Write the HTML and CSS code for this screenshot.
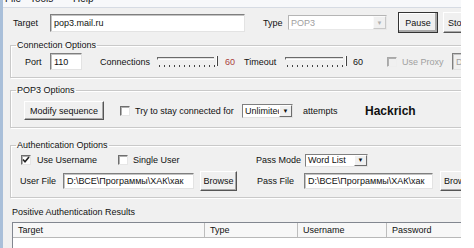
FILE: index.html
```html
<!DOCTYPE html>
<html lang="en">
<head>
    <meta charset="UTF-8">
    <meta name="viewport" content="width=device-width, initial-scale=1.0">
    <title>Hydra GUI</title>
    <link rel="stylesheet" href="styles.css">
</head>
<body>
    <div class="window">
        <div class="menubar">
            <div class="menu-items">
                <span class="m-file">File</span>
                <span class="m-tools">Tools</span>
                <span class="m-help">Help</span>
            </div>
        </div>

        <div class="toprow">
            <span class="lbl w-target">Target</span>
            <div class="txt w-host">pop3.mail.ru</div>
            <span class="lbl w-type">Type</span>
            <div class="sel sel-disabled w-proto"><span class="sel-val">POP3</span><span class="sel-btn">&#9660;</span></div>
            <button class="btn btn-default w-pause">Pause</button>
            <button class="btn w-stop">Stop</button>
        </div>

        <fieldset class="group g-conn">
            <legend>Connection Options</legend>
            <div class="row row-conn">
                <span class="lbl w-port">Port</span>
                <div class="txt w-portval">110</div>
                <span class="lbl w-conns">Connections</span>
                <div class="slider w-slide1"><div class="trough"></div><div class="ticks"></div><div class="thumb"></div></div>
                <span class="lbl val-red w-v1">60</span>
                <span class="lbl w-timeout">Timeout</span>
                <div class="slider w-slide2"><div class="trough"></div><div class="ticks"></div><div class="thumb"></div></div>
                <span class="lbl w-v2">60</span>
                <span class="chk chk-disabled"></span>
                <span class="lbl lbl-disabled w-proxy">Use Proxy</span>
                <div class="txt txt-disabled w-proxyval">D</div>
            </div>
        </fieldset>

        <fieldset class="group g-pop">
            <legend>POP3 Options</legend>
            <div class="row row-pop">
                <button class="btn w-modify">Modify sequence</button>
                <span class="chk chk-pop"></span>
                <span class="lbl w-stay">Try to stay connected for</span>
                <div class="sel w-unlim"><span class="sel-val">Unlimited</span><span class="sel-btn">&#9660;</span></div>
                <span class="lbl w-attempts">attempts</span>
                <span class="brand">Hackrich</span>
            </div>
        </fieldset>

        <fieldset class="group g-auth">
            <legend>Authentication Options</legend>
            <div class="row row-auth1">
                <span class="chk chk-checked">
                    <svg width="8" height="8" viewBox="0 0 8 8"><polyline points="1,3.5 3,5.8 7,1" fill="none" stroke="#222" stroke-width="1.6"/></svg>
                </span>
                <span class="lbl w-useuser">Use Username</span>
                <span class="chk"></span>
                <span class="lbl w-single">Single User</span>
                <span class="lbl w-passmode">Pass Mode</span>
                <div class="sel w-wordlist"><span class="sel-val">Word List</span><span class="sel-btn">&#9660;</span></div>
            </div>
            <div class="row row-auth2">
                <span class="lbl w-userfile">User File</span>
                <div class="txt w-userpath">D:\ВСЕ\Программы\ХАК\хак</div>
                <button class="btn w-browse">Browse</button>
                <span class="lbl w-passfile">Pass File</span>
                <div class="txt w-passpath">D:\ВСЕ\Программы\ХАК\хак</div>
                <button class="btn w-browse2">Browse</button>
            </div>
        </fieldset>

        <div class="results-title">Positive Authentication Results</div>
        <div class="results">
            <div class="results-head">
                <span class="col c-target">Target</span>
                <span class="col c-type">Type</span>
                <span class="col c-user">Username</span>
                <span class="col c-pass">Password</span>
            </div>
            <div class="results-body"></div>
        </div>
    </div>
</body>
</html>
```

FILE: styles.css
```css
* {
    box-sizing: border-box;
}
body {
    margin: 0;
    background: #fff;
    font-family: "Liberation Sans", Arial, sans-serif;
    font-size: 9px;
    color: #111;
}
.window {
    width: 461px;
    height: 248px;
    overflow: hidden;
    background: #f0f0f0;
    border-left: 3px solid #a9bfd9;
}

/* menu bar, only its lower edge is in the picture */
.menubar {
    height: 8px;
    overflow: hidden;
    background: #f7f8fa;
    border-bottom: 1px solid #d6dbe3;
}
.menu-items {
    display: flex;
    margin-top: -6px;
    font-size: 10px;
    line-height: 10px;
}
.m-file { margin-left: 2px; width: 25px; }
.m-tools { width: 43px; }

/* common bits */
.lbl {
    flex-shrink: 0;
    white-space: nowrap;
}
.lbl-disabled {
    color: #a0a0a0;
}
.val-red {
    color: #a8413c;
}
.txt {
    flex-shrink: 0;
    background: #fff;
    border: 1px solid;
    border-color: #7f7f7f #e3e3e3 #e3e3e3 #7f7f7f;
    box-shadow: inset 1px 1px 0 #c4c4c4;
    padding: 0 3px;
    white-space: nowrap;
    overflow: hidden;
    display: flex;
    align-items: center;
}
.txt-disabled {
    background: #f0f0f0;
    color: #a0a0a0;
}
.sel {
    flex-shrink: 0;
    background: #fff;
    border: 1px solid;
    border-color: #7f7f7f #e3e3e3 #e3e3e3 #7f7f7f;
    display: flex;
    align-items: stretch;
    overflow: hidden;
}
.sel-val {
    flex: 1;
    padding-left: 2px;
    display: flex;
    align-items: center;
    overflow: hidden;
    white-space: nowrap;
}
.sel-btn {
    width: 13px;
    flex-shrink: 0;
    background: #f0f0f0;
    border: 1px solid;
    border-color: #fff #6d6d6d #6d6d6d #fff;
    font-size: 6px;
    display: flex;
    align-items: center;
    justify-content: center;
}
.sel-disabled {
    background: #fff;
    color: #a0a0a0;
    border-color: #b5b5b5 #e8e8e8 #e8e8e8 #b5b5b5;
}
.sel-disabled .sel-btn {
    color: #b0b0b0;
    border-color: #fafafa #c8c8c8 #c8c8c8 #fafafa;
}
.btn {
    flex-shrink: 0;
    font-family: inherit;
    font-size: 9px;
    color: #111;
    background: #f0f0f0;
    border: 1px solid;
    border-color: #fff #555 #555 #fff;
    box-shadow: inset -1px -1px 0 #a8a8a8;
    padding: 0;
    white-space: nowrap;
    overflow: hidden;
}
.btn-default {
    outline: 1px solid #333;
    outline-offset: -1px;
    box-shadow: inset -2px -2px 0 #a8a8a8, inset 1px 1px 0 #fff;
}
.chk {
    flex-shrink: 0;
    width: 10px;
    height: 10px;
    background: #fff;
    border: 1px solid;
    border-color: #6e6e6e #e6e6e6 #e6e6e6 #6e6e6e;
    box-shadow: inset 1px 1px 0 #b0b0b0;
    display: flex;
    align-items: center;
    justify-content: center;
}
.chk-disabled {
    background: #f0f0f0;
    border-color: #a8a8a8 #eee #eee #a8a8a8;
}

/* top row */
.toprow {
    display: flex;
    align-items: center;
    height: 21px;
    margin-top: 4px;
    padding-left: 10px;
}
.w-target { width: 37px; }
.w-host { width: 195px; height: 18px; }
.w-type { margin-left: 18px; width: 25px; }
.w-proto { width: 99px; height: 15px; }
.w-pause { margin-left: 11px; width: 40px; height: 21px; }
.w-stop { margin-left: 5px; width: 44px; height: 21px; text-align: left; padding-left: 4px; }

/* group boxes */
.group {
    margin: 7px 0 0 7px;
    width: 470px;
    padding: 0 0 7px 0;
    border: 1px solid #c9c9c9;
    box-shadow: 1px 1px 0 #fff, inset 1px 1px 0 #fff;
    min-width: 0;
}
.group legend {
    margin-left: 5px;
    padding: 0 1px;
    line-height: 10px;
}
.row {
    display: flex;
    align-items: center;
}

/* connection options */
.row-conn {
    height: 17px;
    margin-top: 3px;
    padding-left: 14px;
}
.w-port { width: 25px; }
.w-portval { width: 32px; height: 17px; }
.w-conns { margin-left: 18px; width: 57px; }
.w-slide1 { width: 62px; }
.w-v1 { margin-left: 6px; width: 19px; }
.w-timeout { width: 41px; }
.w-slide2 { width: 63px; }
.w-v2 { margin-left: 5px; width: 34px; }
.w-proxy { margin-left: 5px; width: 50px; }
.w-proxyval { width: 30px; height: 17px; }
.slider {
    flex-shrink: 0;
    height: 13px;
    position: relative;
}
.trough {
    position: absolute;
    left: 0;
    top: 2px;
    right: 5px;
    height: 3px;
    border-top: 1px solid #6a6a6a;
    border-left: 1px solid #6a6a6a;
    border-bottom: 1px solid #fff;
    background: #e2e2e2;
}
.ticks {
    position: absolute;
    left: 2px;
    right: 1px;
    top: 10px;
    height: 2px;
    background: repeating-linear-gradient(to right, #444 0 1px, transparent 1px 5px);
}
.thumb {
    position: absolute;
    right: 1px;
    top: 1px;
    width: 2px;
    height: 10px;
    border-left: 1px solid #fff;
    border-right: 1px solid #444;
}

/* pop3 options */
.g-pop {
    margin-top: 7px;
}
.row-pop {
    height: 19px;
    margin-top: 6px;
    padding-left: 13px;
}
.w-modify { width: 80px; height: 19px; }
.chk-pop { margin-left: 16px; }
.w-stay { margin-left: 5px; width: 107px; }
.w-unlim { width: 51px; height: 14px; }
.w-attempts { margin-left: 10px; width: 62px; }
.brand {
    font-size: 12px;
    font-weight: bold;
    color: #111;
}

/* authentication options */
.g-auth {
    margin-top: 12px;
    padding-bottom: 6px;
}
.row-auth1 {
    height: 14px;
    margin-top: 3px;
    padding-left: 10px;
}
.w-useuser { margin-left: 6px; width: 81px; }
.w-single { margin-left: 5px; width: 123px; }
.w-passmode { width: 49px; }
.w-wordlist { width: 63px; height: 13px; }
.row-auth2 {
    height: 20px;
    margin-top: 4px;
    padding-left: 9px;
}
.w-userfile { width: 43px; }
.w-userpath { width: 131px; height: 16px; }
.w-browse { margin-left: 6px; width: 37px; height: 20px; }
.w-passfile { margin-left: 20px; width: 47px; }
.w-passpath { width: 129px; height: 16px; }
.w-browse2 { margin-left: 7px; width: 40px; height: 20px; text-align: left; padding-left: 3px; }

/* results list */
.results-title {
    margin: 9px 0 0 9px;
    line-height: 11px;
}
.results {
    margin: 4px 0 0 9px;
    width: 480px;
    border-left: 1px solid #828790;
    border-top: 1px solid #828790;
}
.results-head {
    display: flex;
    height: 15px;
    background: #f7f7f7;
    border-bottom: 1px solid #b8b8b8;
}
.col {
    flex-shrink: 0;
    padding-left: 5px;
    border-right: 1px solid #bdbdbd;
    display: flex;
    align-items: center;
}
.c-target { width: 192px; }
.c-type { width: 93px; }
.c-user { width: 89px; }
.c-pass { width: 100px; }
.results-body {
    height: 20px;
    background: #fff;
}
```
